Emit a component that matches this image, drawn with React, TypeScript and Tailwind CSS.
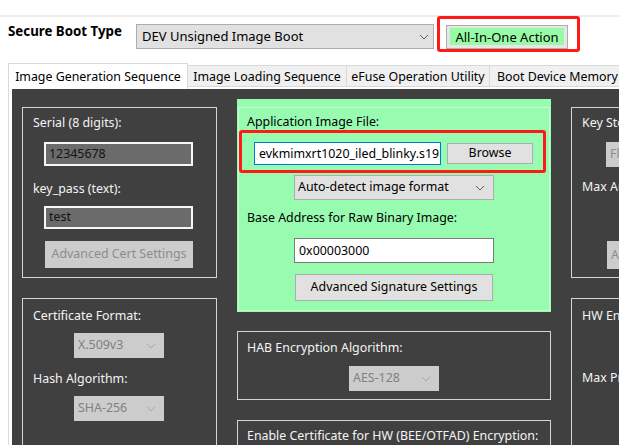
import React from "react";

const Chevron = ({ color = "#606060" }: { color?: string }) => (
  <svg width="10" height="6" viewBox="0 0 10 6" className="shrink-0">
    <polyline points="1,1 5,5 9,1" fill="none" stroke={color} strokeWidth="1" />
  </svg>
);

const DarkLabel = ({ children, className = "" }: { children: React.ReactNode; className?: string }) => (
  <div className={`h-[16px] leading-[16px] text-[#f4f4f4] whitespace-nowrap ${className}`}>{children}</div>
);

const DisabledCombo = ({ value, className = "" }: { value: string; className?: string }) => (
  <div className={`flex items-center justify-between bg-[#cccccc] pl-[4px] pr-[8px] text-[#808080] ${className}`}>
    <span>{value}</span>
    <Chevron color="#a8a8a8" />
  </div>
);

export default function App() {
  return (
    <div className="w-[619px] h-[445px] overflow-hidden bg-white font-['Noto_Sans','Open_Sans',sans-serif] text-[12.4px] text-black">
      <div className="h-[15px]" />
      <div className="h-[2px] bg-[#ededed]" />

      {/* Boot type row */}
      <div className="flex items-start h-[36px] -mt-[1px]">
        <div className="ml-[8px] mt-[7px] w-[128px] font-bold text-[13.3px] leading-[17px] whitespace-nowrap">Secure Boot Type</div>
        <div className="mt-[8px] w-[298px] h-[25px] border border-[#adadad] bg-[#e1e1e1] flex items-center justify-between pl-[5px] pr-[4px]">
          <span className="text-[13px]">DEV Unsigned Image Boot</span>
          <Chevron />
        </div>
        <div className="ml-[3px] w-[143px] h-[36px] border-[3px] border-[#ff1a1a] rounded-[3px]">
          <div className="ml-[6px] mt-[6px] w-[122px] h-[24px] border border-[#adadad] bg-[#e6e6e6] p-[3px] pt-[2px] flex">
            <div className="flex-1 bg-[#97fba6] flex items-center justify-center leading-[16px] text-[13px]">All-In-One Action</div>
          </div>
        </div>
      </div>

      {/* Tabs */}
      <div className="mt-[11px] flex items-start h-[26px] pl-[8px] whitespace-nowrap">
        <div className="w-[180px] shrink-0 h-[26px] bg-white border-t border-l border-r border-[#d9d9d9] flex items-center justify-center pt-[1px]">
          Image Generation Sequence
        </div>
        <div className="mt-[2px] w-[159px] shrink-0 h-[22px] bg-[#f0f0f0] border border-l-0 border-[#d9d9d9] flex items-center justify-center pt-[2px]">
          Image Loading Sequence
        </div>
        <div className="mt-[2px] w-[143px] shrink-0 h-[22px] bg-[#f0f0f0] border border-l-0 border-[#d9d9d9] flex items-center justify-center pt-[2px]">
          eFuse Operation Utility
        </div>
        <div className="mt-[2px] w-[160px] shrink-0 h-[22px] bg-[#f0f0f0] border border-l-0 border-[#d9d9d9] flex items-center pl-[7px] pt-[2px]">
          Boot Device Memory
        </div>
      </div>

      {/* Tab page */}
      <div className="ml-[8px] border-l border-[#d9d9d9] pl-[3px] h-[400px]">
        <div className="bg-[#404040] h-full pl-[10px] flex items-start gap-[20px] whitespace-nowrap">
          {/* Column 1 */}
          <div className="w-[195px] shrink-0 flex flex-col">
            <div className="mt-[18px] h-[171px] border border-[#d4d4d4] flex flex-col">
              <DarkLabel className="ml-[10px] mt-[7px]">Serial (8 digits):</DarkLabel>
              <div className="ml-[21px] mt-[11px] w-[149px] h-[24px] border-2 border-[#f6f6f6] bg-[#6b6b6b] pl-[3px] leading-[19px] text-[#141414]">12345678</div>
              <DarkLabel className="ml-[10px] mt-[15px]">key_pass (text):</DarkLabel>
              <div className="ml-[21px] mt-[9px] w-[149px] h-[23px] border-2 border-[#f6f6f6] bg-[#6b6b6b] pl-[3px] leading-[18px] text-[#141414]">test</div>
              <div className="ml-[22px] mt-[12px] w-[148px] h-[27px] bg-[#cccccc] text-[#8c8c8c] flex items-center justify-center">Advanced Cert Settings</div>
            </div>
            <div className="mt-[20px] h-[200px] border border-[#d4d4d4] flex flex-col">
              <DarkLabel className="ml-[10px] mt-[9px]">Certificate Format:</DarkLabel>
              <DisabledCombo value="X.509v3" className="ml-[51px] mt-[9px] w-[90px] h-[25px]" />
              <DarkLabel className="ml-[10px] mt-[13px]">Hash Algorithm:</DarkLabel>
              <DisabledCombo value="SHA-256" className="ml-[51px] mt-[9px] w-[90px] h-[25px]" />
            </div>
          </div>

          {/* Column 2 */}
          <div className="w-[314px] shrink-0 flex flex-col">
            <div className="mt-[10px] h-[213px] bg-[#98fcb0] pt-[8px] pl-[1px] pr-[1px] pb-[1px]">
              <div className="h-full border border-[#ccf8d6] flex flex-col">
                <DarkLabel className="ml-[8px] mt-[6px] !text-black">Application Image File:</DarkLabel>
                <div className="mt-0 w-[307px] h-[43px] border-[3px] border-[#ff1a1a] rounded-[3px] flex items-start">
                  <div className="ml-[12px] mt-[9px] w-[187px] h-[23px] border border-[#0078d7] bg-white pl-[4px] leading-[21px] overflow-hidden">
                    evkmimxrt1020_iled_blinky.s19
                  </div>
                  <div className="ml-[6px] mt-[10px] w-[86px] h-[21px] border border-[#adadad] bg-[#e1e1e1] flex items-center justify-center">Browse</div>
                </div>
                <div className="ml-[55px] mt-[2px] w-[200px] h-[25px] border border-[#adadad] bg-[#e1e1e1] flex items-center justify-between pl-[3px] pr-[8px]">
                  <span>Auto-detect image format</span>
                  <Chevron />
                </div>
                <DarkLabel className="ml-[8px] mt-[10px] !text-black">Base Address for Raw Binary Image:</DarkLabel>
                <div className="ml-[55px] mt-[12px] w-[200px] h-[25px] border border-[#7a7a7a] bg-white pl-[4px] leading-[23px]">0x00003000</div>
                <div className="ml-[56px] mt-[11px] w-[198px] h-[27px] border border-[#adadad] bg-[#e1e1e1] flex items-center justify-center">Advanced Signature Settings</div>
              </div>
            </div>
            <div className="mt-[19px] h-[69px] border border-[#d4d4d4] flex flex-col">
              <DarkLabel className="ml-[9px] mt-[8px]">HAB Encryption Algorithm:</DarkLabel>
              <DisabledCombo value="AES-128" className="ml-[111px] mt-[10px] w-[90px] h-[25px]" />
            </div>
            <div className="mt-[20px] h-[60px] border border-[#d4d4d4] flex flex-col">
              <DarkLabel className="ml-[9px] mt-[7px]">Enable Certificate for HW (BEE/OTFAD) Encryption:</DarkLabel>
            </div>
          </div>

          {/* Column 3 */}
          <div className="w-[195px] shrink-0 flex flex-col">
            <div className="mt-[18px] h-[171px] border border-[#d4d4d4] flex flex-col">
              <DarkLabel className="ml-[10px] mt-[7px]">Key Storage Mode:</DarkLabel>
              <div className="ml-[34px] mt-[11px] w-[140px] h-[25px] bg-[#cccccc] text-[#8c8c8c] flex items-center pl-[4px]">Flashloader Resident</div>
              <DarkLabel className="ml-[10px] mt-[12px]">Max Auth Data Size:</DarkLabel>
              <div className="ml-[35px] mt-[46px] w-[140px] h-[28px] bg-[#cccccc] text-[#8c8c8c] flex items-center pl-[4px]">Advanced Key Settings</div>
            </div>
            <div className="mt-[20px] h-[200px] border border-[#d4d4d4] flex flex-col">
              <DarkLabel className="ml-[10px] mt-[9px]">HW Encryption Type:</DarkLabel>
              <DarkLabel className="ml-[10px] mt-[46px]">Max Protect Regions:</DarkLabel>
            </div>
          </div>
        </div>
      </div>
    </div>
  );
}
